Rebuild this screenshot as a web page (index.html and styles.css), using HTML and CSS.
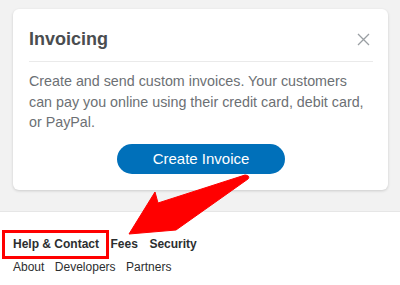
FILE: index.html
```html
<!DOCTYPE html>
<html lang="en">
<head>
<meta charset="utf-8">
<title>Invoicing</title>
<link rel="stylesheet" href="styles.css">
</head>
<body>
<div class="page">
  <div class="top">
    <section class="card">
      <header class="card-head">
        <h2 class="card-title">Invoicing</h2>
        <button class="close" aria-label="Close">
          <svg width="13" height="13" viewBox="0 0 13 13"><path d="M1 1L12 12M12 1L1 12" stroke="#9a9fa3" stroke-width="1.3" fill="none"/></svg>
        </button>
      </header>
      <p class="card-text">Create and send custom invoices. Your customers can pay you online using their credit card, debit card, or PayPal.</p>
      <div class="actions"><a class="btn" href="#">Create Invoice</a></div>
    </section>
  </div>
  <footer class="footer">
    <nav class="links main">
      <a href="#">Help &amp; Contact</a>
      <a href="#">Fees</a>
      <a href="#">Security</a>
    </nav>
    <nav class="links sub">
      <a href="#">About</a>
      <a href="#">Developers</a>
      <a href="#">Partners</a>
    </nav>
  </footer>
  <div class="highlight"></div>
  <svg class="arrow" width="400" height="285" viewBox="0 0 400 285">
    <path d="M245 175 L158 203 L155 192 L129 234 L176 230 L248 179 Q250.5 175.5 245 175 Z" fill="#ff0000" stroke="#ff0000" stroke-width="1" stroke-linejoin="round"/>
  </svg>
</div>
</body>
</html>
```

FILE: styles.css
```css
* { box-sizing: border-box; }
html, body { margin: 0; padding: 0; }
body {
  font-family: "Liberation Sans", Arial, sans-serif;
  background: #ffffff;
  width: 400px;
  height: 285px;
  overflow: hidden;
}
.page {
  position: relative;
  width: 400px;
  height: 285px;
}
.top {
  background: #f2f2f2;
  height: 212px;
  padding: 9px 12px 0 13px;
  border-bottom: 1px solid #e6e6e6;
}
.card {
  background: #ffffff;
  border-radius: 6px;
  box-shadow: 0 1px 3px rgba(0, 0, 0, 0.16);
  height: 181px;
  padding: 19px 15px 16px 16px;
}
.card-head {
  display: flex;
  align-items: center;
  justify-content: space-between;
  padding-bottom: 11px;
  border-bottom: 1px solid #eaeaea;
}
.card-title {
  margin: 0;
  font-size: 18px;
  line-height: 22px;
  font-weight: bold;
  color: #4a4d50;
}
.close {
  border: 0;
  background: none;
  padding: 0;
  margin-right: 3px;
  width: 13px;
  height: 13px;
  display: flex;
}
.card-text {
  margin: 9px 0 0 0;
  font-size: 14.3px;
  line-height: 20.5px;
  color: #6c7074;
}
.actions {
  display: flex;
  justify-content: center;
  margin-top: 11px;
}
.btn {
  display: flex;
  align-items: center;
  justify-content: center;
  width: 168px;
  height: 30px;
  border-radius: 15px;
  background: #0070ba;
  color: #ffffff;
  font-size: 15px;
  text-decoration: none;
}
.footer {
  padding: 24px 13px 0 13px;
}
.links {
  display: flex;
  gap: 10.5px;
  font-size: 12px;
  line-height: 16px;
}
.links a {
  color: #2c2e2f;
  text-decoration: none;
}
.main { gap: 11.5px; }
.main a { font-weight: bold; }
.sub { margin-top: 7px; }
.highlight {
  position: absolute;
  left: 2px;
  top: 230px;
  width: 107px;
  height: 29px;
  border: 3px solid #ff0000;
}
.arrow {
  position: absolute;
  left: 0;
  top: 0;
  pointer-events: none;
}
```
